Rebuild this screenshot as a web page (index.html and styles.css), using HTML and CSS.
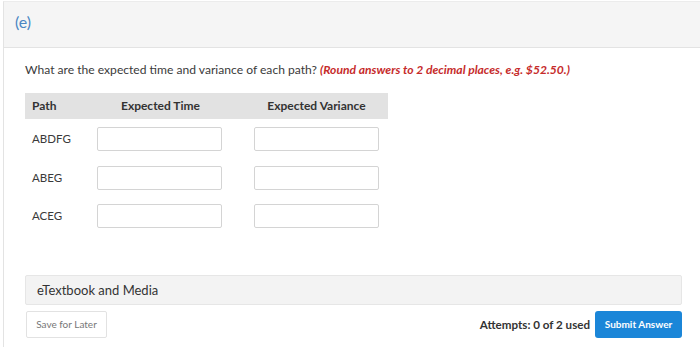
FILE: index.html
```html
<!DOCTYPE html>
<html lang="en">
<head>
    <meta charset="UTF-8">
    <meta name="viewport" content="width=device-width, initial-scale=1.0">
    <link rel="stylesheet" href="styles.css">
    <title>Question (e)</title>
</head>
<body>
    <div class="frame">
        <!-- cabecalho da parte -->
        <div class="part-head">(e)</div>
        <div class="part-body">
            <p class="question">What are the expected time and variance of each path? <em class="hint">(Round answers to 2 decimal places, e.g. $52.50.)</em></p>

            <div class="paths">
                <div class="th th-path">Path</div>
                <div class="th th-time">Expected Time</div>
                <div class="th th-var">Expected Variance</div>

                <div class="path">ABDFG</div>
                <div class="cell"><input type="text" class="answer"></div>
                <div class="cell"><input type="text" class="answer"></div>

                <div class="path">ABEG</div>
                <div class="cell"><input type="text" class="answer"></div>
                <div class="cell"><input type="text" class="answer"></div>

                <div class="path">ACEG</div>
                <div class="cell"><input type="text" class="answer"></div>
                <div class="cell"><input type="text" class="answer"></div>
            </div>

            <div class="media">eTextbook and Media</div>

            <div class="actions">
                <button class="btn-save">Save for Later</button>
                <div class="right">
                    <span class="attempts">Attempts: 0 of 2 used</span>
                    <button class="btn-submit">Submit Answer</button>
                </div>
            </div>
        </div>
    </div>
</body>
</html>
```

FILE: styles.css
```css
:root {
    --text: #333;
    --line: #e3e3e3;
    --head-bg: #f5f5f5;
    --th-bg: #e2e2e2;
    --red: #c62b2b;
    --blue: #1b86d8;
    --link: #4a86c3;
}
body {
    margin: 0;
    overflow: hidden;
    font-family: Lato, "Open Sans", sans-serif;
    color: var(--text);
    background: #fff;
}
.frame {
    margin-left: 3px;
    margin-top: 1px;
    border-left: 1px solid var(--line);
    border-top: 1px solid #ececec;
    height: 345px;
}
.part-head {
    height: 45px;
    line-height: 40px;
    padding-left: 11px;
    background-color: var(--head-bg);
    border-bottom: 1px solid var(--line);
    color: var(--link);
    font-size: 16px;
}
.part-body {
    padding: 0 18px 0 21px;
}
.question {
    margin: 15px 0 0;
    font-size: 12.1px;
    line-height: 14px;
    color: #3a3a3a;
}
.hint {
    color: var(--red);
    font-weight: bold;
}
.paths {
    display: grid;
    grid-template-columns: 72px 157px 134px;
    grid-template-rows: 26px repeat(3, 38.5px);
    width: 363px;
    margin-top: 16px;
    font-size: 11.5px;
}
.th {
    background-color: var(--th-bg);
    font-weight: bold;
    font-size: 12px;
    line-height: 26px;
    text-align: center;
}
.th-path {
    text-align: left;
    padding-left: 7px;
}
.th-time {
    padding-right: 30px;
}
.th-var {
    padding-right: 9px;
}
.path {
    padding: 8px 0 0 7px;
    line-height: 24px;
    color: #3a3a3a;
}
.cell {
    padding-top: 8px;
}
.answer {
    display: block;
    box-sizing: border-box;
    width: 125px;
    height: 24px;
    border: 1px solid #d4d4d4;
    border-radius: 2px;
    margin: 0;
}
.media {
    margin-top: 40px;
    height: 28px;
    line-height: 28px;
    padding-left: 11px;
    background-color: #f3f3f3;
    border: 1px solid #e6e6e6;
    border-radius: 2px;
    font-size: 13px;
    color: #333;
}
.actions {
    display: flex;
    justify-content: space-between;
    align-items: center;
    margin-top: 6px;
}
.btn-save {
    width: 81px;
    height: 27px;
    margin-left: 1px;
    background: #fff;
    border: 1px solid #e2e2e2;
    border-radius: 2px;
    color: #777;
    font-family: Lato, sans-serif;
    font-size: 10px;
    padding: 0;
}
.right {
    display: flex;
    align-items: center;
    gap: 5px;
}
.attempts {
    font-size: 11.6px;
    font-weight: bold;
    color: #333;
}
.btn-submit {
    width: 87px;
    height: 27px;
    background-color: var(--blue);
    border: none;
    border-radius: 3px;
    color: #fff;
    font-family: Lato, sans-serif;
    font-size: 10px;
    font-weight: bold;
    padding: 0;
}
```
